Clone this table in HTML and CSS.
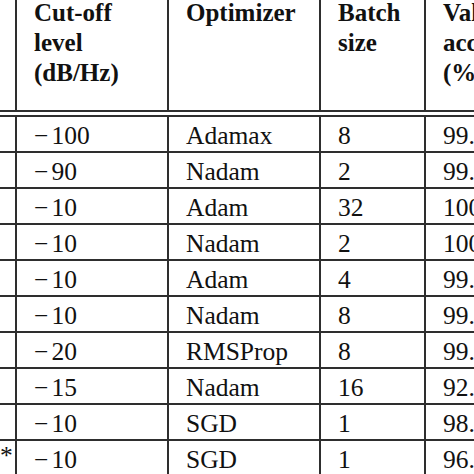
FILE: index.html
```html
<!DOCTYPE html>
<html>
<head>
<meta charset="utf-8">
<link rel="stylesheet" href="styles.css">
</head>
<body>
<div class="frame">
<table class="results">
  <colgroup>
    <col class="c-model"><col class="c-cut"><col class="c-opt"><col class="c-batch"><col class="c-acc">
  </colgroup>
  <thead>
    <tr>
      <th></th>
      <th>Cut-off<br>level<br>(dB/Hz)</th>
      <th>Optimizer</th>
      <th>Batch<br>size</th>
      <th>Validation<br>accuracy<br>(%)</th>
    </tr>
  </thead>
  <tbody>
    <tr><td></td><td><span class="neg">−</span>100</td><td>Adamax</td><td>8</td><td>99.58</td></tr>
    <tr><td></td><td><span class="neg">−</span>90</td><td>Nadam</td><td>2</td><td>99.17</td></tr>
    <tr><td></td><td><span class="neg">−</span>10</td><td>Adam</td><td>32</td><td>100</td></tr>
    <tr><td></td><td><span class="neg">−</span>10</td><td>Nadam</td><td>2</td><td>100</td></tr>
    <tr><td></td><td><span class="neg">−</span>10</td><td>Adam</td><td>4</td><td>99.58</td></tr>
    <tr><td></td><td><span class="neg">−</span>10</td><td>Nadam</td><td>8</td><td>99.58</td></tr>
    <tr><td></td><td><span class="neg">−</span>20</td><td>RMSProp</td><td>8</td><td>99.17</td></tr>
    <tr><td></td><td><span class="neg">−</span>15</td><td>Nadam</td><td>16</td><td>92.50</td></tr>
    <tr><td></td><td><span class="neg">−</span>10</td><td>SGD</td><td>1</td><td>98.33</td></tr>
    <tr><td class="mark">*</td><td><span class="neg">−</span>10</td><td>SGD</td><td>1</td><td>96.67</td></tr>
  </tbody>
</table>
</div>
</body>
</html>
```
FILE: styles.css
```css
html, body {
  margin: 0;
  padding: 0;
  background: #fff;
}
.frame {
  width: 474px;
  height: 474px;
  overflow: hidden;
}
.results {
  border-collapse: collapse;
  table-layout: fixed;
  width: 640px;
  margin-top: -2px;
  font-family: "Liberation Serif", "Times New Roman", serif;
  color: #111;
}
.c-model { width: 16px; }
.c-cut { width: 152px; }
.c-opt { width: 152px; }
.c-batch { width: 105px; }
.c-acc { width: 215px; }
.results th {
  font-size: 25px;
  font-weight: bold;
  line-height: 30px;
  text-align: left;
  vertical-align: top;
  padding: 0 0 0 17px;
  height: 112px;
  border-left: 2px solid #2e2e2e;
  border-bottom: 7px double #2e2e2e;
  white-space: nowrap;
}
.results th:first-child,
.results td:first-child {
  border-left: none;
  padding: 0;
}
.results td {
  font-size: 25.5px;
  line-height: 28px;
  height: 30px;
  padding: 4px 0 0 17px;
  vertical-align: middle;
  border-left: 2px solid #2e2e2e;
  border-top: 2px solid #2e2e2e;
  white-space: nowrap;
}
.neg {
  margin-right: 3px;
}
.results td.mark {
  text-align: right;
  padding: 0 8px 0 0;
  vertical-align: top;
  line-height: 30px;
}
```
